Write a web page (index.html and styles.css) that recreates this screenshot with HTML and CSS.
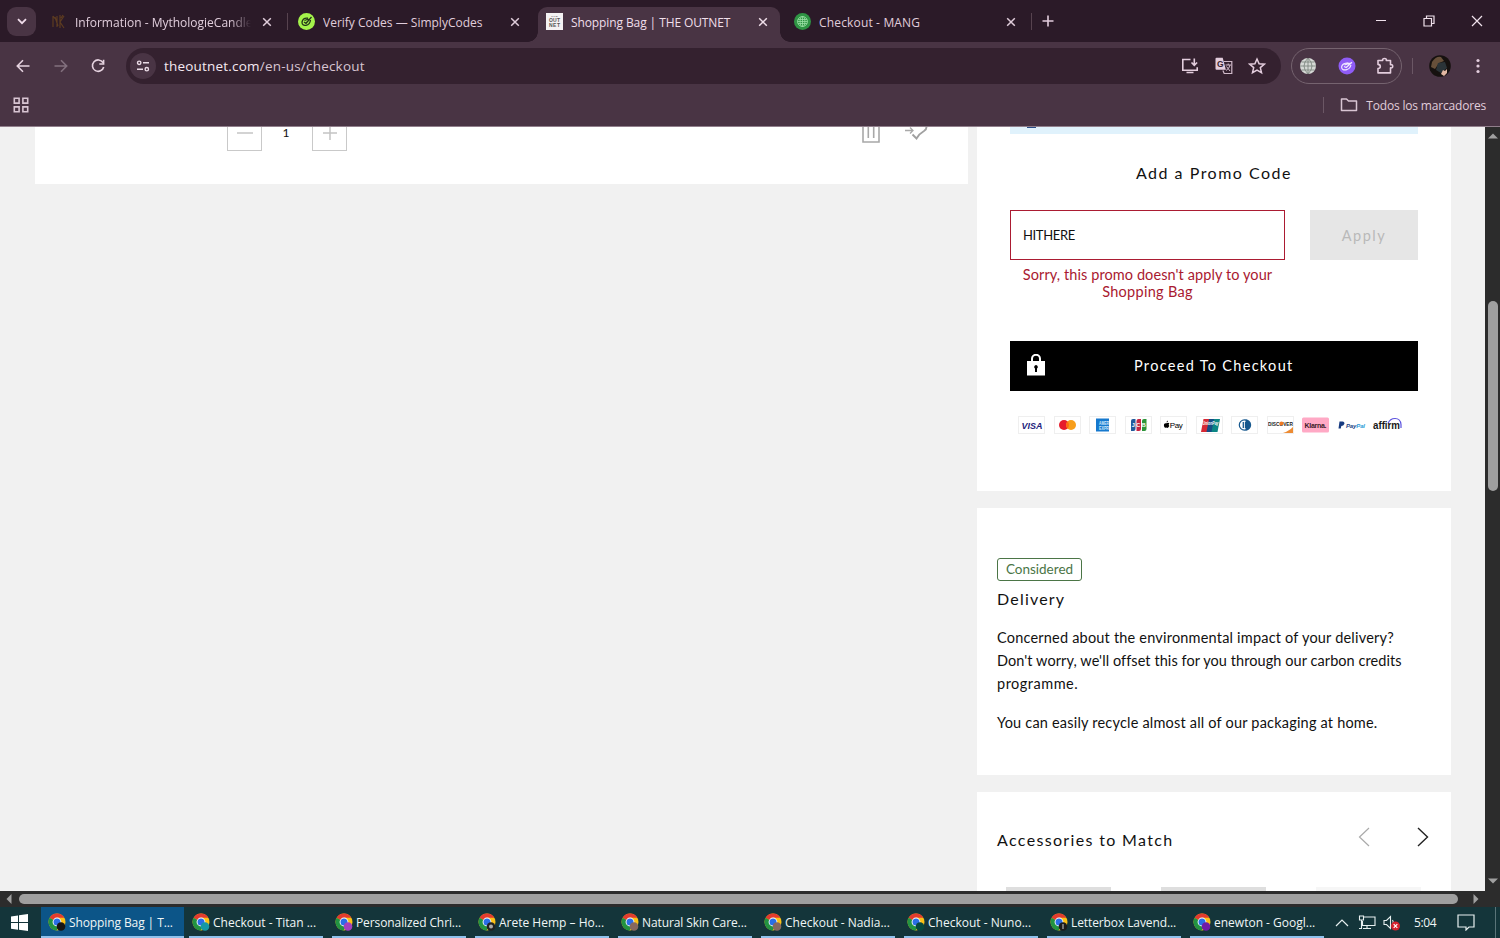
FILE: index.html
```html
<!DOCTYPE html>
<html lang="en">
  <head>
    <meta charset="UTF-8" />
    <meta name="viewport" content="width=device-width, initial-scale=1.0" />
    <title>Shopping Bag | THE OUTNET</title>
    <link rel="stylesheet" href="styles.css">
  </head>
  <body>
    <!-- shared symbols -->
    <svg class="symbols" width="0" height="0">
      <symbol id="x" viewBox="0 0 10 10"><path d="M1.2 1.2l7.6 7.6M8.8 1.2L1.2 8.8" stroke="currentColor" stroke-width="1.5" fill="none" /></symbol>
      <symbol id="chrome" viewBox="0 0 18 18">
        <circle cx="9" cy="9" r="8.5" fill="#fbc116" />
        <path d="M9 9L1.6 4.8A8.5 8.5 0 0 1 16.4 4.8H9z" fill="#e33b2e" />
        <path d="M9 9L1.6 4.8A8.5 8.5 0 0 0 8.6 17.5L12.6 11z" fill="#229342" />
        <circle cx="9" cy="9" r="4.4" fill="#fff" />
        <circle cx="9" cy="9" r="3.5" fill="#2a6fe6" />
      </symbol>
    </svg>

    <header class="tabs">
      <button class="tab-search"><svg width="10" height="7" viewBox="0 0 10 7"><path d="M1 1.2l4 4 4-4" stroke="#f0dcea" stroke-width="1.8" fill="none" /></svg></button>
      <div class="tab divided">
        <svg class="favicon" width="17" height="17" viewBox="0 0 17 17"><path d="M3 3v11M3 3l4 5v6M7 3v5M10 2v13M14 3l-4 6 4 6M5 4l3 9M11 5l2-3" stroke="#5d3c20" stroke-width="1.2" fill="none" /></svg>
        <span class="tab-title fade">Information - MythologieCandles</span>
        <svg class="close" width="10" height="10"><use href="#x" /></svg>
      </div>
      <div class="tab">
        <svg class="favicon" width="17" height="17" viewBox="0 0 17 17"><circle cx="8.5" cy="8.5" r="8.5" fill="#a4f34b" /><path d="M10 5.2Q5 4.5 4 9q0 4 4 3.3 4-.8 4.5-5.3M6 9l2 1.3 5.5-6.3M6.5 7.5l4-1.5" stroke="#23351a" stroke-width="1.3" fill="none" /></svg>
        <span class="tab-title">Verify Codes — SimplyCodes</span>
        <svg class="close" width="10" height="10"><use href="#x" /></svg>
      </div>
      <div class="tab active">
        <svg class="favicon" width="17" height="17" viewBox="0 0 17 17"><rect width="17" height="17" fill="#f4f2f3" /><g font-family="Liberation Sans" font-weight="700" fill="#555" text-anchor="middle"><text x="8.5" y="4" font-size="2.5">T H E</text><text x="8.5" y="9" font-size="5" textLength="11">OUT</text><text x="8.5" y="13.5" font-size="5" textLength="11">NET</text></g></svg>
        <span class="tab-title tight">Shopping Bag | THE OUTNET</span>
        <svg class="close" width="10" height="10"><use href="#x" /></svg>
      </div>
      <div class="tab divided">
        <svg class="favicon" width="17" height="17" viewBox="0 0 17 17"><circle cx="8.5" cy="8.5" r="8.5" fill="#2f9444" /><g stroke="#9be0a5" stroke-width=".8" fill="none"><circle cx="8.5" cy="8.5" r="5" /><ellipse cx="8.5" cy="8.5" rx="2.4" ry="5" /><path d="M4 6.5h9M3.5 8.5h10M4 10.5h9M8.5 3.5v10" /></g></svg>
        <span class="tab-title loose">Checkout - MANG</span>
        <svg class="close" width="10" height="10"><use href="#x" /></svg>
      </div>
      <svg class="new-tab" width="12" height="12" viewBox="0 0 12 12"><path d="M6 .5v11M.5 6h11" stroke="#e3cddd" stroke-width="1.6" /></svg>
      <div class="window-buttons">
        <svg width="12" height="12" viewBox="0 0 12 12"><path d="M1 5.5h10" stroke="#f0e2ec" /></svg>
        <svg width="12" height="12" viewBox="0 0 12 12"><path d="M1 3.5h7.5V11H1zM3.5 3.5V1H11v7.5H8.5" stroke="#f0e2ec" stroke-width="1.2" fill="none" /></svg>
        <svg width="12" height="12" viewBox="0 0 12 12"><path d="M1 1l10 10M11 1L1 11" stroke="#f0e2ec" stroke-width="1.2" /></svg>
      </div>
    </header>

    <div class="chrome-bars">
      <div class="toolbar">
        <div class="nav">
          <svg width="16" height="16" viewBox="0 0 16 16"><path d="M14.5 8H2.5M8 2.3L2.3 8 8 13.7" stroke="#e6d3e0" stroke-width="1.6" fill="none" /></svg>
          <svg width="16" height="16" viewBox="0 0 16 16"><path d="M1.5 8h12M8 2.3L13.7 8 8 13.7" stroke="#82707e" stroke-width="1.6" fill="none" /></svg>
          <svg width="16" height="16" viewBox="0 0 16 16"><path d="M13 4.6A5.7 5.7 0 1 0 13.7 9M13.6 1.8v4.2H9.3" stroke="#e6d3e0" stroke-width="1.6" fill="none" /></svg>
        </div>
        <div class="omnibox">
          <span class="site-info"><svg width="14" height="14" viewBox="0 0 14 14"><g stroke="#eadbe6" stroke-width="1.4" fill="none"><circle cx="3.2" cy="3.8" r="1.7" /><path d="M7 3.8h6M1 10.2h6" /><circle cx="10.8" cy="10.2" r="1.7" /></g></svg></span>
          <span class="url">theoutnet.com<i>/en-us/checkout</i></span>
          <div class="omni-icons">
            <svg width="18" height="18" viewBox="0 0 18 18"><path d="M9.5 2.5H1.8v10.7h14.4v-3M5.5 15.5h7" stroke="#e3cddd" stroke-width="1.6" fill="none" /><path d="M13.3 1.5v6M10.5 5.5l2.8 2.8 2.8-2.8" stroke="#e3cddd" stroke-width="1.6" fill="none" /></svg>
            <svg width="18" height="18" viewBox="0 0 18 18"><path d="M1.5.8h6.2l3.2 12H1.5q-1 0-1-1V1.8q0-1 1-1z" fill="#e3cddd" /><path d="M8.8 4.5h8v12H9.2l-1.3-3" stroke="#d0bac9" stroke-width="1.2" fill="none" /><text x="2" y="10" font-family="Liberation Sans" font-size="8.5" font-weight="700" fill="#38242f">G</text><path d="M10.5 8H16M13.2 6.5V8M11 13.5q3.5-2 4-5.5M11.5 9.5l3.5 4.5" stroke="#d0bac9" fill="none" /></svg>
            <svg width="18" height="18" viewBox="0 0 18 18"><path d="M9 2l2.1 4.7 5.1.5-3.9 3.4 1.2 5.1L9 13l-4.5 2.7 1.2-5.1-3.9-3.4 5.1-.5z" stroke="#e3cddd" stroke-width="1.5" fill="none" /></svg>
          </div>
        </div>
        <div class="extensions">
          <svg width="18" height="18" viewBox="0 0 18 18"><circle cx="9" cy="9" r="8" fill="#d5d8d5" /><path d="M1 9h16M2.5 5h13M2.5 13h13M9 1v16M9 1q-8 8 0 16M9 1q8 8 0 16" stroke="#768078" stroke-width=".8" fill="none" /></svg>
          <svg width="18" height="18" viewBox="0 0 18 18"><circle cx="9" cy="9" r="8.5" fill="#8f5cf6" /><path d="M10.5 5.8Q4 6 3.6 10q.2 3.5 4.5 2.8 4-.8 4.8-4.8M6 9.5l2.2 1L14 5.3M6.5 8l6-2" stroke="#f1eaff" stroke-width="1.2" fill="none" /></svg>
          <svg width="18" height="18" viewBox="0 0 18 18"><path d="M2 3.5h4.7q-.5-2 1.8-2t1.8 2h4.2v4.2q2.2-.4 2.2 1.6t-2.2 1.6v5H2v-4.3q2.3-.2 2.3-2.1T2 7.4z" stroke="#e3cddd" stroke-width="1.6" fill="none" stroke-linejoin="round" /></svg>
        </div>
        <span class="bar-line"></span>
        <svg class="avatar" width="22" height="22" viewBox="0 0 22 22"><circle cx="11" cy="11" r="10.8" fill="#16110f" /><path d="M3 7q4-6 9-5l3 4-5 2-4 6-4-2z" fill="#67503a" /><path d="M9 8l7-1 2 6-6 5-5-3z" fill="#2b3438" /><path d="M12 19l2-4 2 1 2-2v4l-3 3z" fill="#e3b8a3" /></svg>
        <svg class="dots" width="4" height="16" viewBox="0 0 4 16" fill="#e3cddd"><circle cx="2" cy="2.5" r="1.6" /><circle cx="2" cy="8" r="1.6" /><circle cx="2" cy="13.5" r="1.6" /></svg>
      </div>
      <div class="bookmarks">
        <svg width="16" height="16" viewBox="0 0 16 16"><path d="M1.3 1.3h4.8v4.8H1.3zM9.9 1.3h4.8v4.8H9.9zM1.3 9.9h4.8v4.8H1.3zM9.9 9.9h4.8v4.8H9.9z" stroke="#d9c5d3" stroke-width="1.6" fill="none" /></svg>
        <span class="bar-line"></span>
        <svg class="folder" width="18" height="14" viewBox="0 0 18 14"><path d="M1.5 1h5l2 2h8v9.5h-15z" stroke="#d9c5d3" stroke-width="1.5" fill="none" stroke-linejoin="round" /></svg>
        <span class="bookmark-text">Todos los marcadores</span>
      </div>
    </div>

    <div class="view">
      <main class="page">
        <section class="card item">
          <div class="qty">
            <span class="step"><svg width="16" height="16" viewBox="0 0 16 16"><path d="M0 8h16" stroke="#c4c4c4" stroke-width="1.5" /></svg></span>
            <span class="count">1</span>
            <span class="step"><svg width="16" height="16" viewBox="0 0 16 16"><path d="M1 8h14M8 1v14" stroke="#c4c4c4" stroke-width="1.5" /></svg></span>
          </div>
          <svg class="trash" width="18" height="16" viewBox="0 0 18 16"><path d="M1 0v15h16V0M6.3 0v11M11.7 0v11" stroke="#a8a8a8" stroke-width="1.6" fill="none" /></svg>
          <svg class="wish" width="24" height="13" viewBox="0 0 24 13"><path d="M0 3.5h8M5 .5l3 3-3 3" stroke="#a9a9a9" stroke-width="1.3" fill="none" /><path d="M7.5 7.5l4 4q3-5 7.5-7.5Q21.5 2.5 21.5 0" stroke="#a0a0a0" stroke-width="1.9" fill="none" /></svg>
        </section>

        <aside class="side">
          <section class="card summary">
            <div class="notice"><span></span></div>
            <h2>Add a Promo Code</h2>
            <div class="promo">
              <div class="promo-left">
                <div class="promo-input">HITHERE</div>
                <p class="error">Sorry, this promo doesn't apply to your <span>Shopping Bag</span></p>
              </div>
              <div class="apply">Apply</div>
            </div>
            <div class="checkout">
              <svg width="18" height="22" viewBox="0 0 18 22"><path d="M5 8V4.8a4 4 0 0 1 8 0V8" stroke="#fff" stroke-width="2" fill="none" /><path d="M0 7h18v14.5H0z" fill="#fff" /><path d="M9 11a2 2 0 0 1 1 3.6V18H8v-3.4A2 2 0 0 1 9 11z" /></svg>
              <span>Proceed To Checkout</span>
            </div>
            <div class="payments">
              <svg viewBox="0 0 27 18"><text x="14" y="12.5" textLength="21" lengthAdjust="spacingAndGlyphs" font-size="9.5" font-style="italic" font-weight="800" fill="#24247c">VISA</text></svg>
              <svg viewBox="0 0 27 18"><circle cx="10" cy="9" r="5" fill="#e61c2b" /><circle cx="17" cy="9" r="5" fill="#f79e1b" /><path d="M13.5 5.5a5 5 0 0 1 0 7 5 5 0 0 1 0-7" fill="#ff6a13" /></svg>
              <svg viewBox="0 0 27 18"><path d="M7 2.5h13v13H7z" fill="#1679ce" /><text x="15" y="8.5" font-size="5" font-weight="700" textLength="10" lengthAdjust="spacingAndGlyphs" fill="#d5eafa">AMER</text><text x="15" y="13.5" font-size="5" font-weight="700" textLength="10" lengthAdjust="spacingAndGlyphs" fill="#d5eafa">EXPR</text></svg>
              <svg viewBox="0 0 27 18"><path d="M6 5q0-2 2-2h2.500v10q0 2-2 2H6z" fill="#215a9c" /><path d="M11.5 5q0-2 2-2H16v10q0 2-2 2h-2.5z" fill="#c62544" /><path d="M17 5q0-2 2-2h2.5v10q0 2-2 2H17z" fill="#2b9439" /><text x="13.7" y="11" font-size="5.5" font-weight="700" textLength="14" fill="#fff">JCB</text></svg>
              <svg viewBox="0 0 27 18"><path d="M6.5 7.2q2-1 2.8.4-1.4 1 0 2.5-1 2.5-2.8 1.5-1.7.9-2.5-1.4-.6-3.5 2.5-3zM6.5 6.5q0-1.7 1.5-2 .1 1.7-1.5 2z" /><text x="16.3" y="12" font-size="8" textLength="13">Pay</text></svg>
              <svg viewBox="0 0 27 18"><path d="M7.5 3H14l-2.5 13H5z" fill="#d72834" /><path d="M13 3h6l-2.5 13h-6z" fill="#164c84" /><path d="M18 3h6l-2.5 13h-6z" fill="#0b8685" /><text x="14.5" y="9" font-size="4.5" font-style="italic" font-weight="700" textLength="16" lengthAdjust="spacingAndGlyphs" fill="#fff">UnionPay</text></svg>
              <svg viewBox="0 0 27 18"><circle cx="13.5" cy="9" r="5.2" fill="#fff" stroke="#16588e" stroke-width="1.2" /><path d="M14.5 3.3a5.7 5.7 0 0 1 0 11.4z" fill="#16588e" /><path d="M12.3 6v6M14.5 6v6" stroke="#16588e" stroke-width="1.3" /></svg>
              <svg viewBox="0 0 27 18"><path d="M27 10v8H10q11-1 17-8z" fill="#ed8b32" /><text x="13.5" y="9.5" font-size="5.5" font-weight="700" textLength="25" lengthAdjust="spacingAndGlyphs" fill="#222">DISCOVER</text><circle cx="14.5" cy="7.5" r="2" fill="#ef7923" /></svg>
              <svg class="plain" viewBox="0 0 27 18"><rect y="1.5" width="27" height="15" rx="1.5" fill="#ffa9c5" /><text x="13.5" y="12" font-size="7" font-weight="700" textLength="22" fill="#3a1b28">Klarna.</text></svg>
              <svg class="plain" viewBox="0 0 27 18"><path d="M1.5 5.5h3q2.5.5 1.8 2.5-.7 2-3 2l-.5 2.5H.5z" fill="#173b80" /><text x="17.5" y="11.5" font-size="6" font-style="italic" font-weight="800" textLength="19" fill="#1c3f83">Pay<tspan fill="#2b9cd8">Pal</tspan></text></svg>
              <svg class="plain" viewBox="0 0 27 18"><path d="M15 7.5q2-5 7-5 5.5 0 6 6V12" stroke="#5b52de" stroke-width="1.2" fill="none" /><text x="13.5" y="13" font-size="10" font-weight="600" textLength="27" lengthAdjust="spacingAndGlyphs" fill="#171717">affirm</text></svg>
            </div>
          </section>

          <section class="card delivery">
            <span class="badge">Considered</span>
            <h2>Delivery</h2>
            <p>Concerned about the environmental impact of your delivery?<br><span class="tight-line">Don't worry, we'll offset this for you through our carbon credits</span><br><span class="wide-line">programme.</span></p>
            <p>You can easily recycle almost all of our packaging at home.</p>
          </section>

          <section class="card match">
            <div class="match-head">
              <h2>Accessories to Match</h2>
              <svg width="12" height="20" viewBox="0 0 12 20"><path d="M11 1L1.5 10 11 19" stroke="#aaa" stroke-width="1.2" fill="none" /></svg>
              <svg width="12" height="20" viewBox="0 0 12 20"><path d="M1 1l9.5 9L1 19" stroke="#222" stroke-width="1.4" fill="none" /></svg>
            </div>
            <div class="thumbs"><span></span><span></span><span class="light"></span></div>
          </section>
        </aside>
      </main>
      <div class="vscroll">
        <svg width="10" height="6" viewBox="0 0 10 6"><path d="M0 5.5L5 .5l5 5z" fill="#a0a0a0" /></svg>
        <span class="vthumb"></span>
        <svg width="10" height="6" viewBox="0 0 10 6"><path d="M0 .5l5 5 5-5z" fill="#a0a0a0" /></svg>
      </div>
    </div>
    <div class="hscroll">
      <svg width="6" height="10" viewBox="0 0 6 10"><path d="M5.5 0l-5 5 5 5z" fill="#a0a0a0" /></svg>
      <span class="hthumb"></span>
      <svg width="6" height="10" viewBox="0 0 6 10"><path d="M.5 0l5 5-5 5z" fill="#a0a0a0" /></svg>
    </div>

    <footer class="taskbar">
      <div class="start"><svg width="17" height="17" viewBox="0 0 17 17"><path d="M0 2.4l7-1v6.700H0zM8 1.2L17 0v8.1H8zM0 9h7v6.7l-7-1zM8 9h9v8l-9-1.2z" fill="#fff" /></svg></div>
      <div class="task current"><svg width="18" height="18"><use href="#chrome" /><circle cx="13" cy="13.5" r="4.3" fill="#181512" /></svg><span class="tight">Shopping Bag | T...</span></div>
      <div class="task"><svg width="18" height="18"><use href="#chrome" /><circle cx="13" cy="13.5" r="4.3" fill="#1598a5" /></svg><span>Checkout - Titan ...</span></div>
      <div class="task"><svg width="18" height="18"><use href="#chrome" /><circle cx="13" cy="13.5" r="4.3" fill="#a340bd" /></svg><span class="tight">Personalized Chri...</span></div>
      <div class="task"><svg width="18" height="18"><use href="#chrome" /><circle cx="13" cy="13.5" r="4.3" fill="#222" /><circle cx="13" cy="13.5" r="2" fill="#aaa" /></svg><span>Arete Hemp – Ho...</span></div>
      <div class="task"><svg width="18" height="18"><use href="#chrome" /><circle cx="13" cy="13.5" r="4.3" fill="#87685f" /></svg><span class="tight">Natural Skin Care...</span></div>
      <div class="task"><svg width="18" height="18"><use href="#chrome" /><circle cx="13" cy="13.5" r="4.3" fill="#87685f" /></svg><span>Checkout - Nadia...</span></div>
      <div class="task"><svg width="18" height="18"><use href="#chrome" /><circle cx="13" cy="13.5" r="4.3" fill="#06483e" /></svg><span>Checkout - Nuno...</span></div>
      <div class="task"><svg width="18" height="18"><use href="#chrome" /><circle cx="13" cy="13.5" r="4.3" fill="#1c1c1c" /><path d="M13 11v5" stroke="#ccc" /></svg><span class="tight">Letterbox Lavend...</span></div>
      <div class="task"><svg width="18" height="18"><use href="#chrome" /><circle cx="13" cy="13.5" r="4.3" fill="#701ba6" /></svg><span>enewton - Googl...</span></div>
      <div class="tray">
        <svg width="14" height="8" viewBox="0 0 14 8"><path d="M1 7l6-6 6 6" stroke="#e8f0f0" stroke-width="1.2" fill="none" /></svg>
        <svg class="network" width="18" height="15" viewBox="0 0 18 15"><path d="M6 2h11v8.5H4.5V6M5 13.5h8M9 10.5v3M1.5 1h4v4h-4zM3.5 5v8.5H1" stroke="#e8f0f0" stroke-width="1.1" fill="none" /></svg>
        <svg class="sound" width="18" height="16" viewBox="0 0 18 16"><path d="M1 5.5h2.5l4-4v12l-4-4H1zM9.5 5q1.5 2 0 4" stroke="#e8f0f0" stroke-width="1.1" fill="none" /><circle cx="12.5" cy="11" r="4.5" fill="#d5232f" /><path d="M10.7 9.2l3.6 3.6M14.3 9.2l-3.6 3.6" stroke="#fff" stroke-width="1.2" /></svg>
        <span class="clock">5:04</span>
        <svg width="18" height="17" viewBox="0 0 18 17"><path d="M1 1h16v12h-5l-3 3v-3H1z" stroke="#e8f0f0" stroke-width="1.2" fill="none" /></svg>
        <span class="desktop-line"></span>
      </div>
    </footer>
  </body>
</html>
```
FILE: styles.css
```css
* {
  box-sizing: border-box;
}

body {
  margin: 0;
  width: 1500px;
  height: 938px;
  overflow: hidden;
  display: flex;
  flex-direction: column;
  font-family: "Open Sans", "Noto Sans", sans-serif;
  font-size: 12px;
  background: #f1f1f1;
}

.symbols {
  position: absolute;
}

svg {
  display: block;
  flex: none;
}

h2,
p {
  margin: 0;
}

.tight {
  letter-spacing: -0.1px;
}

.loose {
  letter-spacing: 0.16px;
}

/* tab strip */
.tabs {
  height: 42px;
  flex: none;
  display: flex;
  background: #2b1a28;
  color: #e0cddb;
}

.tab-search {
  width: 29px;
  height: 29px;
  margin: 7px 6px 0 7px;
  padding: 0;
  border: 0;
  border-radius: 9px;
  background: #493444;
  display: flex;
  align-items: center;
  justify-content: center;
}

.tab {
  position: relative;
  width: 242px;
  height: 35px;
  margin: 7px 6px 0 0;
  padding: 0 12px 6px 8px;
  display: flex;
  align-items: center;
}

.tab.divided::after {
  content: "";
  position: absolute;
  right: -4px;
  top: 6px;
  width: 1px;
  height: 17px;
  background: #57434f;
}

.tab.active {
  background: #493444;
  border-radius: 9px 9px 0 0;
  color: #f0dfea;
}

/* flared feet of the active tab */
.tab.active::before,
.tab.active::after {
  content: "";
  position: absolute;
  bottom: 0;
  width: 10px;
  height: 10px;
}

.tab.active::before {
  left: -10px;
  background: radial-gradient(circle at 0 0, transparent 9.5px, #493444 10px);
}

.tab.active::after {
  right: -10px;
  background: radial-gradient(circle at 100% 0, transparent 9.5px, #493444 10px);
}

.tab-title {
  margin-left: 8px;
  padding-top: 1px;
  width: 178px;
  white-space: nowrap;
  overflow: hidden;
}

.fade {
  -webkit-mask-image: linear-gradient(90deg, #000 155px, transparent 176px);
  mask-image: linear-gradient(90deg, #000 155px, transparent 176px);
}

.close {
  margin-left: auto;
}

.new-tab {
  margin: 15px 0 0 8px;
}

.window-buttons {
  margin-left: auto;
  width: 143px;
  height: 42px;
  display: flex;
}

.window-buttons svg {
  margin: 15px 18px 0;
}

/* toolbar and bookmarks */
.chrome-bars {
  height: 85px;
  flex: none;
  background: #493444;
  border-bottom: 1px solid #917f8c;
}

.toolbar {
  height: 48px;
  display: flex;
  align-items: center;
}

.nav {
  display: flex;
  gap: 21.5px;
  width: 126px;
  padding-left: 15px;
}

.omnibox {
  width: 1155px;
  height: 36px;
  padding: 0 15px 0 4px;
  border-radius: 18px;
  background: #34212f;
  display: flex;
  align-items: center;
}

.site-info {
  width: 26px;
  height: 26px;
  border-radius: 50%;
  background: #493444;
  display: flex;
  align-items: center;
  justify-content: center;
}

.url {
  margin-left: 8px;
  font-size: 13.5px;
  letter-spacing: 0.2px;
  color: #f5e9f2;
}

.url i {
  font-style: normal;
  color: #d8c5d2;
}

.omni-icons {
  margin-left: auto;
  display: flex;
  gap: 15.5px;
}

.extensions {
  width: 111px;
  height: 36px;
  margin-left: 10px;
  padding: 0 7px;
  border: 1px solid #75636f;
  border-radius: 18px;
  display: flex;
  align-items: center;
  justify-content: space-between;
}

.bar-line {
  width: 1px;
  height: 16px;
  margin-left: 10px;
  background: #6b5765;
}

.avatar {
  margin-left: 16px;
}

.dots {
  margin-left: 25px;
}

.bookmarks {
  height: 30px;
  padding: 0 14px 0 13px;
  display: flex;
  align-items: center;
  color: #e0cddb;
}

.bookmarks .bar-line {
  margin-left: auto;
}

.bookmark-text {
  letter-spacing: -0.18px;
}

.folder {
  margin: 0 8px 0 16px;
}

/* web page */
.view {
  height: 764px;
  flex: none;
  display: flex;
}

.page {
  width: 1485px;
  padding-left: 35px;
  overflow: hidden;
  display: flex;
  gap: 9px;
  align-items: flex-start;
  background: #f1f1f1;
  font-family: "Lato", sans-serif;
  color: #111;
}

.card {
  background: #fff;
}

.item {
  width: 933px;
  height: 57px;
  padding-left: 192px;
  display: flex;
}

.qty {
  display: flex;
  width: 635px;
}

.step {
  width: 35px;
  height: 24px;
  border: 1px solid #c9c9c9;
  border-top: 0;
  display: flex;
  justify-content: center;
}

.step svg {
  margin-top: -2px;
}

.count {
  width: 50px;
  padding-right: 2px;
  text-align: center;
  font-size: 12px;
  line-height: 11px;
}

.wish {
  margin-left: 25px;
}

.side {
  width: 474px;
}

.summary {
  height: 364px;
  padding: 0 33px;
}

.notice {
  height: 7px;
  background: #e0f2fc;
  padding-left: 17px;
}

.notice span {
  display: block;
  width: 9px;
  height: 1px;
  background: #294c86;
}

h2 {
  font-size: 16px;
  font-weight: 400;
  letter-spacing: 1.2px;
  line-height: 20px;
}

.summary h2 {
  margin: 29px 0 27px;
  letter-spacing: 1.5px;
  text-align: center;
}

.promo {
  height: 131px;
  display: flex;
  justify-content: space-between;
}

.promo-left {
  width: 275px;
}

.promo-input {
  height: 50px;
  padding-left: 12px;
  border: 1px solid #ab1b32;
  font-size: 13px;
  letter-spacing: -0.35px;
  line-height: 49px;
}

.error {
  margin-top: 6px;
  text-align: center;
  font-size: 14.5px;
  letter-spacing: 0.09px;
  line-height: 17px;
  color: #a91930;
}

.error span {
  letter-spacing: 0.3px;
}

.apply {
  width: 108px;
  height: 50px;
  background: #e6e6e6;
  color: #b9b9b9;
  font-size: 14.5px;
  letter-spacing: 1.5px;
  line-height: 51px;
  text-align: center;
}

.checkout {
  height: 50px;
  padding-left: 17px;
  background: #000;
  color: #fff;
  font-size: 14.5px;
  letter-spacing: 1.3px;
  display: flex;
  align-items: center;
}

.checkout svg {
  margin-bottom: 2px;
}

.checkout span {
  margin-left: 89px;
  padding-bottom: 1px;
}

.payments {
  margin: 25px 0 0 8px;
  display: flex;
  gap: 8.5px;
  font-family: "Liberation Sans", sans-serif;
}

.payments svg {
  width: 27px;
  height: 18px;
  overflow: visible;
  outline: 1px solid #efefef;
  outline-offset: -1px;
}

.payments text {
  text-anchor: middle;
}

.payments .plain {
  outline: 0;
}

.delivery {
  height: 267px;
  margin-top: 17px;
  padding: 50px 20px 0;
}

.badge {
  display: block;
  width: 85px;
  height: 23px;
  border: 1px solid #4b7546;
  border-radius: 3px;
  color: #4b7546;
  font-size: 13.5px;
  line-height: 20px;
  text-align: center;
}

.delivery h2 {
  margin: 8px 0 17px;
}

.delivery p {
  margin-bottom: 16px;
  font-size: 14.5px;
  letter-spacing: 0.2px;
  line-height: 23px;
  white-space: nowrap;
}

.tight-line {
  letter-spacing: 0.07px;
}

.wide-line {
  letter-spacing: 0.5px;
}

.match {
  height: 99px;
  margin-top: 17px;
  padding: 35px 22px 0 20px;
}

.match-head {
  height: 60px;
  display: flex;
  align-items: flex-start;
}

.match-head h2 {
  width: 361px;
  margin-top: 3px;
  letter-spacing: 1.34px;
}

.match-head svg + svg {
  margin-left: 47px;
}

.thumbs {
  display: flex;
  gap: 50px;
  padding-left: 9px;
}

.thumbs span {
  width: 105px;
  height: 4px;
  background: #dedede;
}

.thumbs .light {
  background: #f6f6f6;
}

/* scrollbars */
.vscroll {
  width: 15px;
  background: #2c2c2c;
  display: flex;
  flex-direction: column;
  align-items: center;
  padding-top: 6px;
}

.vthumb {
  width: 10px;
  height: 190px;
  margin: 162px 0 387px;
  border-radius: 5px;
  background: #9f9f9f;
}

.hscroll {
  height: 16px;
  flex: none;
  padding: 0 21px 0 6px;
  background: #2c2c2c;
  display: flex;
  align-items: center;
}

.hthumb {
  width: 1439px;
  height: 10px;
  margin: 0 15px 0 7px;
  border-radius: 5px;
  background: #9f9f9f;
}

/* taskbar */
.taskbar {
  height: 31px;
  flex: none;
  display: flex;
  background: #14353a;
  color: #f0f6f6;
}

.start {
  width: 41px;
  padding: 7px 0 0 11px;
}

.task {
  width: 134px;
  margin-right: 9px;
  padding-left: 3px;
  display: flex;
  align-items: center;
  gap: 3px;
  white-space: nowrap;
  border-bottom: 2px solid #8fc1ec;
}

.task span {
  padding-top: 1px;
}

.task.current {
  width: 143px;
  margin-right: 5px;
  padding-left: 7px;
  background: #0c5588;
}

.tray {
  flex: 1;
  display: flex;
  align-items: center;
  margin-left: 2px;
}

.network {
  margin-left: 9px;
}

.sound {
  margin-left: 7px;
}

.clock {
  margin: 0 21px 0 13px;
  letter-spacing: -0.4px;
}

.desktop-line {
  width: 1px;
  height: 31px;
  margin-left: auto;
  margin-right: 4px;
  background: #5a7478;
}
```
